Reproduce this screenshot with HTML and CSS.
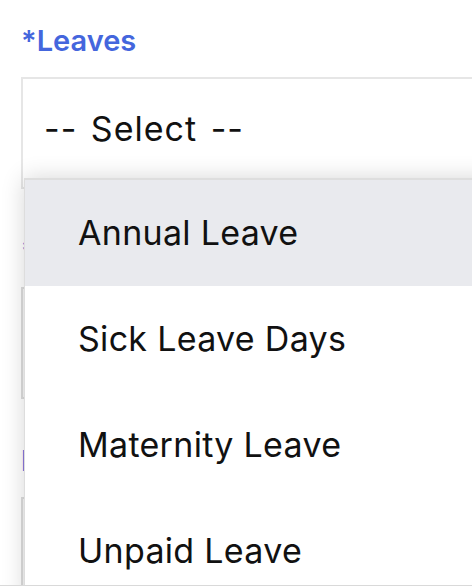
FILE: index.html
```html
<!DOCTYPE html>
<html lang="en">
<head>
<meta charset="utf-8">
<title>Leave form</title>
<link rel="stylesheet" href="styles.css">
</head>
<body>
<div class="screen">
  <form class="form">
    <div class="field">
      <div class="label">*Leaves</div>
      <div class="box select"><span class="select-value">-- Select --</span></div>
    </div>
    <div class="field">
      <div class="label">*Start Date</div>
      <div class="box muted"></div>
    </div>
    <div class="field">
      <div class="label">Reason</div>
      <div class="box muted"></div>
    </div>
  </form>
  <ul class="menu">
    <li class="option active">Annual Leave</li>
    <li class="option">Sick Leave Days</li>
    <li class="option">Maternity Leave</li>
    <li class="option">Unpaid Leave</li>
  </ul>
</div>
</body>
</html>
```

FILE: styles.css
```css
html, body {
  margin: 0;
  padding: 0;
  background: #ffffff;
}

body {
  font-family: Inter, "Noto Sans", "Liberation Sans", sans-serif;
  color: #111111;
}

.screen {
  position: relative;
  width: 472px;
  height: 586px;
  overflow: hidden;
  box-sizing: border-box;
  border-bottom: 1px solid #d9d9d9;
}

.form {
  width: 560px;
  padding: 26px 0 0 21px;
  display: flex;
  flex-direction: column;
  gap: 47px;
}

.field {
  display: flex;
  flex-direction: column;
  gap: 22px;
}

.label {
  font-size: 29px;
  line-height: 29px;
  font-weight: 600;
  color: #4466dd;
}

.box {
  height: 112px;
  box-sizing: border-box;
  border: 2px solid #e6e6e6;
  background: #ffffff;
}

.box.muted {
  background: #f7f7f7;
  border-color: #dcdcdc;
}

.select {
  padding: 33px 0 0 21px;
}

.select-value {
  display: block;
  font-size: 34px;
  line-height: 34px;
  letter-spacing: 1px;
  word-spacing: 3px;
  color: #111111;
}

.menu {
  position: absolute;
  top: 178px;
  left: 24px;
  width: 560px;
  margin: 0;
  padding: 0;
  list-style: none;
  background: #ffffff;
  border-top: 2px solid #dedede;
  border-left: 1px solid #dddddd;
  box-shadow: 0 0 22px rgba(0, 0, 0, 0.16);
}

.option {
  height: 106px;
  padding-left: 53px;
  font-size: 34px;
  line-height: 106px;
  letter-spacing: 0.3px;
  color: #111111;
}

.option.active {
  background: #e9eaee;
}
```
